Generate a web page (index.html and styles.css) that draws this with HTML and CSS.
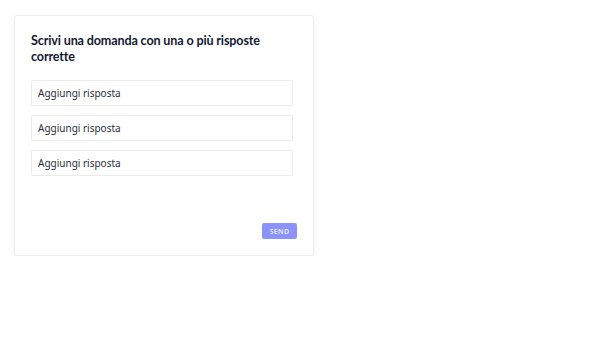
FILE: index.html
```html
<!DOCTYPE html>
<html lang="it">
<head>
<meta charset="utf-8">
<link rel="stylesheet" href="styles.css">
</head>
<body>
<div class="card">
  <h1 class="title">Scrivi una domanda con una o più risposte corrette</h1>
  <div class="answers">
    <div class="answer">Aggiungi risposta</div>
    <div class="answer">Aggiungi risposta</div>
    <div class="answer">Aggiungi risposta</div>
  </div>
  <div class="actions">
    <button class="send">SEND</button>
  </div>
</div>
</body>
</html>
```

FILE: styles.css
```css
html, body {
  margin: 0;
  padding: 0;
  background: #ffffff;
}
body {
  padding: 15px 0 0 14px;
  font-family: "Noto Sans", "Open Sans", sans-serif;
}
.card {
  box-sizing: border-box;
  width: 300px;
  height: 241px;
  background: #fff;
  border: 1px solid #efefef;
  border-radius: 3px;
  box-shadow: 0 1px 3px rgba(0,0,0,0.08);
  padding: 17px 16px 0 16px;
  display: flex;
  flex-direction: column;
}
.title {
  margin: 0;
  font-family: "Lato", "Noto Sans", sans-serif;
  font-size: 12.6px;
  line-height: 16px;
  font-weight: 700;
  letter-spacing: -0.15px;
  color: #141a33;
  width: 250px;
}
.answers {
  margin-top: 15px;
  display: flex;
  flex-direction: column;
  gap: 9px;
  width: 262px;
}
.answer {
  box-sizing: border-box;
  height: 26px;
  border: 1px solid #ebebeb;
  border-radius: 2px;
  padding: 0 6px;
  display: flex;
  align-items: center;
  font-size: 10px;
  color: #2a2e3a;
}
.actions {
  margin-top: auto;
  margin-bottom: 16px;
  display: flex;
  justify-content: flex-end;
}
.send {
  width: 35px;
  height: 16px;
  border: none;
  border-radius: 2px;
  background: #8b93fb;
  color: #e8eaff;
  font-family: inherit;
  font-size: 7px;
  font-weight: 600;
  letter-spacing: 0.3px;
  padding: 0;
}
```
